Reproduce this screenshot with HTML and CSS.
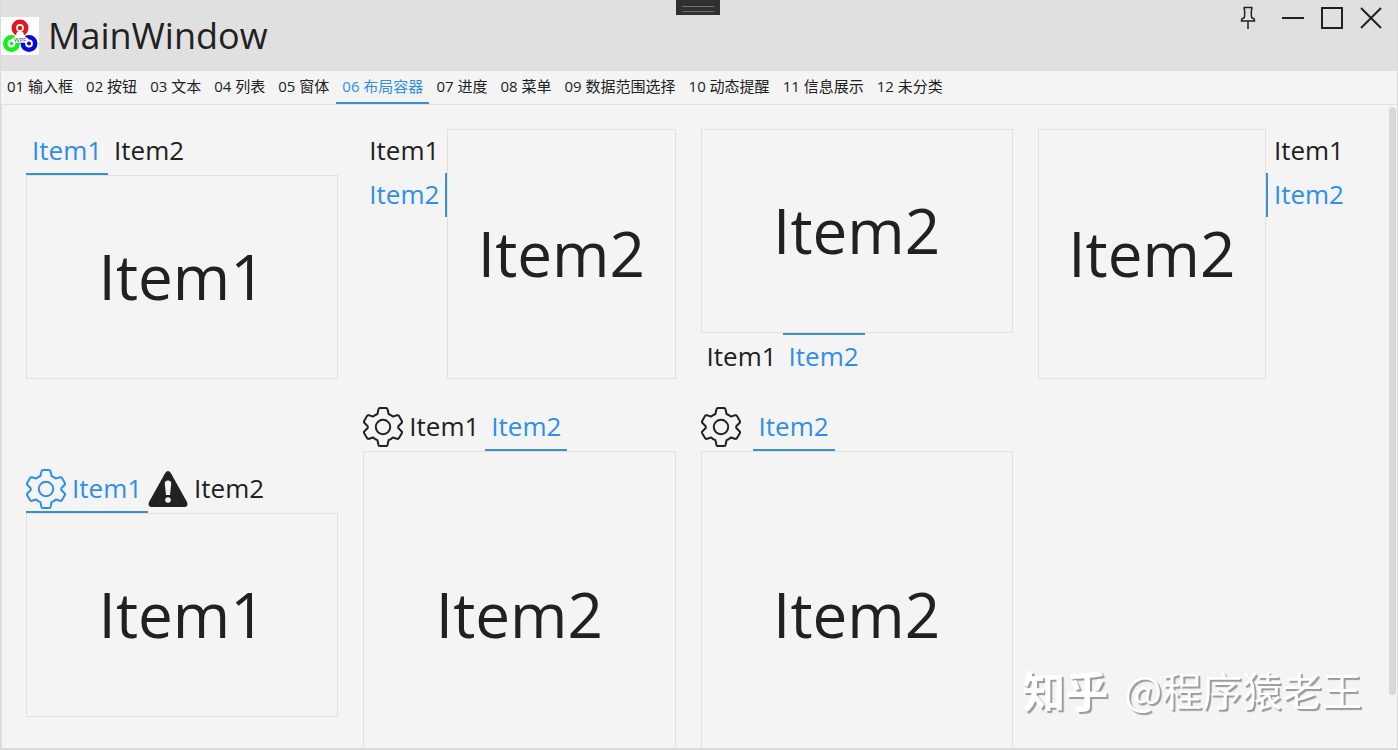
FILE: index.html
```
<!DOCTYPE html>
<html lang="zh-CN">
<head>
    <meta charset="UTF-8">
    <meta name="viewport" content="width=device-width, initial-scale=1.0">
    <title>MainWindow</title>
    <link rel="stylesheet" href="styles.css">
</head>
<body>
    <!-- 共用图标 -->
    <svg class="symbols" aria-hidden="true">
        <symbol id="gear" viewBox="0 0 40 40">
            <path d="M17 1H23Q24.200 1 24.500 2.200L25.600 7Q28 8 29.800 9.600L34 8.300Q35.400 8 36 9L38.800 14Q39.400 15.200 38.500 16L35.300 19.200V21L38.500 24.200Q39.400 25 38.800 26.200L36 31Q35.400 32.200 34 31.800L29.800 30.500Q28 32.200 25.600 33.200L24.500 37.900Q24.200 39 23 39H17Q15.800 39 15.500 37.900L14.400 33.200Q12 32.200 10.200 30.500L6 31.800Q4.600 32.200 4 31L1.200 26.200Q.6 25 1.500 24.200L4.700 21V19.200L1.500 16Q.6 15.200 1.200 14L4 9Q4.600 8 6 8.300L10.200 9.600Q12 8 14.400 7L15.500 2.200Q15.800 1 17 1Z"/>
            <circle cx="20" cy="20" r="7.2"/>
        </symbol>
    </svg>

    <div class="window">
        <header class="title-bar">
            <svg class="logo" viewBox="0 0 38 38" aria-hidden="true">
                <rect width="38" height="38" fill="#fff"/>
                <g fill="none" stroke-width="4.6">
                    <circle cx="19" cy="11" r="6.2" stroke="#e8141c"/>
                    <circle cx="10.500" cy="26.500" r="6.200" stroke="#12f01c"/>
                    <circle cx="28" cy="26.500" r="6.200" stroke="#0808e0"/>
                </g>
                <path d="M16 15H22Q23 20 28 22L25 26Q19 25 13.500 26L10.500 22Q15 20 16 15Z" fill="#fff"/>
                <circle cx="19" cy="11" r="2.2" fill="#e8141c"/>
                <circle cx="10.500" cy="26.500" r="1.800" fill="#12f01c"/>
                <circle cx="28" cy="26.500" r="2" fill="#0808e0"/>
                <text x="19" y="25" text-anchor="middle" class="logo-text">WPF</text>
            </svg>
            <h1 class="title">MainWindow</h1>
            <div class="debug-bar"></div>
            <div class="window-buttons">
                <button aria-label="置顶"><svg class="pin" viewBox="0 0 16 24"><path d="M3.500 1.500H12.500M4 1.500Q5.500 8 4 12Q1.500 12 1.500 15H14.500Q14.500 12 12 12Q10.500 8 12 1.500M8 15V23"/></svg></button>
                <button aria-label="最小化"><svg viewBox="0 0 24 24"><path d="M1 12H23"/></svg></button>
                <button aria-label="最大化"><svg viewBox="0 0 24 24"><path d="M2 2H22V22H2Z"/></svg></button>
                <button aria-label="关闭"><svg viewBox="0 0 24 24"><path d="M2 2L22 22M22 2L2 22"/></svg></button>
            </div>
        </header>

        <nav class="main-tabs">
            <button>01 输入框</button>
            <button>02 按钮</button>
            <button>03 文本</button>
            <button>04 列表</button>
            <button>05 窗体</button>
            <button class="active">06 布局容器</button>
            <button>07 进度</button>
            <button>08 菜单</button>
            <button>09 数据范围选择</button>
            <button>10 动态提醒</button>
            <button>11 信息展示</button>
            <button>12 未分类</button>
        </nav>

        <div class="body">
            <main class="content">
                <section class="tab-control">
                    <div class="tabs">
                        <button class="active">Item1</button>
                        <button>Item2</button>
                    </div>
                    <div class="panel">Item1</div>
                </section>

                <section class="tab-control left">
                    <div class="tabs">
                        <button>Item1</button>
                        <button class="active">Item2</button>
                    </div>
                    <div class="panel">Item2</div>
                </section>

                <section class="tab-control bottom">
                    <div class="tabs">
                        <button>Item1</button>
                        <button class="active">Item2</button>
                    </div>
                    <div class="panel">Item2</div>
                </section>

                <section class="tab-control right">
                    <div class="tabs">
                        <button>Item1</button>
                        <button class="active">Item2</button>
                    </div>
                    <div class="panel">Item2</div>
                </section>

                <section class="tab-control">
                    <div class="tabs">
                        <button class="active"><svg class="icon"><use href="#gear"/></svg><span>Item1</span></button>
                        <button>
                            <svg class="icon warning" viewBox="0 0 40 40">
                                <path d="M17.2 4Q20 .2 22.8 4L39 33Q40.500 37.500 36.500 38H3.500Q-.5 37.500 1 33Z"/>
                                <path class="mark" d="M20 11.500Q23.500 11.500 23.200 15L22 26H18L16.800 15Q16.500 11.500 20 11.500Z"/>
                                <circle class="mark" cx="20" cy="31" r="2.800"/>
                            </svg><span>Item2</span>
                        </button>
                    </div>
                    <div class="panel">Item1</div>
                </section>

                <section class="tab-control tall">
                    <div class="tabs">
                        <button><svg class="icon"><use href="#gear"/></svg><span>Item1</span></button>
                        <button class="active">Item2</button>
                    </div>
                    <div class="panel">Item2</div>
                </section>

                <section class="tab-control tall">
                    <div class="tabs">
                        <button aria-label="设置"><svg class="icon"><use href="#gear"/></svg><span></span></button>
                        <button class="active">Item2</button>
                    </div>
                    <div class="panel">Item2</div>
                </section>
            </main>
            <div class="scrollbar"><div class="thumb"></div></div>
        </div>
    </div>

    <div class="watermark"><b>知乎</b><span>@程序猿老王</span></div>
</body>
</html>
```
FILE: styles.css
```
:root {
    --primary-color: #2f8eea;
    --line-color: #3c8fcf;
    --text-color: #212121;
    --border-color: #e0e0e0;
    --back-color: #f4f4f4;
}

* {
    margin: 0;
    padding: 0;
    box-sizing: border-box;
}

body {
    font-family: 'Open Sans', 'Noto Sans CJK SC', sans-serif;
    color: var(--text-color);
    background-color: var(--back-color);
}

button {
    font: inherit;
    color: inherit;
    background: none;
    border: none;
    cursor: pointer;
}

.symbols {
    display: none;
}

.window {
    display: flex;
    flex-direction: column;
    height: 100vh;
    border: 1px solid #dadada;
    border-width: 0 1px 2px;
}

/* 标题栏 */
.title-bar {
    position: relative;
    display: flex;
    align-items: center;
    height: 71px;
    flex-shrink: 0;
    background-color: var(--border-color);
}

.logo {
    width: 38px;
    height: 38px;
}

.logo-text {
    font-size: 6px;
    fill: #444;
}

.title {
    flex: 1;
    padding: 0 9px;
    font-size: 36px;
    font-weight: 400;
}

.debug-bar {
    position: absolute;
    top: 0;
    left: 50%;
    width: 44px;
    height: 15px;
    margin-left: -23px;
    padding: 6px;
    background-color: #303032;
}

.debug-bar::before {
    content: '';
    display: block;
    height: 4px;
    border: 1px solid #707070;
    border-width: 1px 0;
}

.window-buttons {
    display: flex;
    align-self: flex-start;
    gap: 15px;
    padding: 6px 14px;
}

.window-buttons button {
    display: flex;
    justify-content: center;
    width: 24px;
}

.window-buttons button:first-child {
    margin-right: 6px;
}

.window-buttons svg {
    width: 24px;
    height: 24px;
    fill: none;
    stroke: var(--text-color);
    stroke-width: 2;
}

.window-buttons .pin {
    width: 16px;
    stroke-width: 1.5;
}

/* 主导航 */
.main-tabs {
    display: flex;
    gap: 1px;
    height: 34px;
    flex-shrink: 0;
    font-size: 15px;
    border-bottom: 1px solid var(--border-color);
}

.main-tabs button {
    padding: 0 6px;
    line-height: 30px;
    padding-bottom: 1px;
    border-bottom: 2px solid transparent;
    white-space: nowrap;
}

.main-tabs .active,
.tabs .active {
    color: var(--primary-color);
    border-color: var(--line-color);
}

/* 内容 */
.body {
    display: flex;
    flex: 1;
    min-height: 0;
    border-left: 1px solid var(--border-color);
}

.content {
    flex: 1;
    display: grid;
    grid-template-columns: repeat(4, 1fr);
    grid-template-rows: 250px 374px;
    gap: 26px 25px;
    align-items: center;
    padding: 24px 39px 24px 24px;
    overflow-y: auto;
    scrollbar-width: none;
}

.tab-control {
    display: flex;
    flex-direction: column;
    height: 250px;
}

.tab-control.tall {
    height: 100%;
}

.tab-control.left {
    flex-direction: row;
}

.tab-control.right {
    flex-direction: row-reverse;
}

.tab-control.bottom {
    flex-direction: column-reverse;
}

.tabs {
    display: flex;
    font-size: 26px;
    line-height: 34px;
}

.tabs button {
    display: flex;
    align-items: center;
    height: 46px;
    padding: 0 6px;
    border: 0 solid transparent;
    border-bottom-width: 2px;
}

/* 文字略高于按钮中线 */
.tabs button:not(:has(.icon)) {
    padding-bottom: 2px;
}

.tabs span {
    padding-bottom: 2px;
}

.tabs .active {
    border-color: var(--line-color);
}

.bottom .tabs button {
    border-width: 2px 0 0;
}

.left .tabs,
.right .tabs {
    flex-direction: column;
}

.left .tabs button {
    height: 44px;
    border-width: 0 2px 0 0;
}

.right .tabs button {
    height: 44px;
    border-width: 0 0 0 2px;
}

.icon {
    width: 40px;
    height: 40px;
    margin: 0 6px 0 -6px;
    fill: none;
    stroke: currentColor;
    stroke-width: 2;
    stroke-linejoin: round;
}

.icon.warning {
    fill: currentColor;
    stroke: none;
}

.warning .mark {
    fill: var(--back-color);
}

.panel {
    flex: 1;
    display: flex;
    align-items: center;
    justify-content: center;
    padding-bottom: 2px;
    font-size: 62px;
    border: 1px solid var(--border-color);
}

.scrollbar {
    width: 8px;
    padding: 2px 0;
}

.thumb {
    width: 7px;
    height: 92%;
    border-radius: 4px;
    background-color: #d8d8d8;
}

/* 水印 */
.watermark {
    position: fixed;
    right: 36px;
    bottom: 31px;
    display: flex;
    align-items: center;
    gap: 16px;
    font-family: 'Noto Sans CJK SC', sans-serif;
    font-size: 40px;
    line-height: 60px;
    color: #fff;
    text-shadow: 2px 2px 1px #999;
    pointer-events: none;
}

.watermark b {
    font-size: 43px;
    font-weight: 700;
}
```
